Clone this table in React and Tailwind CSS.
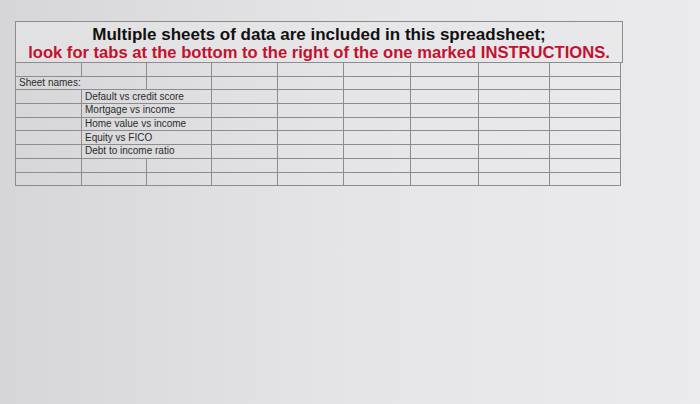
const widths = [65, 65, 65, 66, 66, 67, 68, 71, 71]

const sheetNames = [
  'Default vs credit score',
  'Mortgage vs income',
  'Home value vs income',
  'Equity vs FICO',
  'Debt to income ratio',
]

function Cell({ children, span = 1 }) {
  return (
    <td
      colSpan={span}
      className="border border-[#8c8c8e] px-[3px] p-0 h-[13.7px] leading-[12px] text-[10px] text-[#2b2b2b] whitespace-nowrap overflow-hidden align-middle"
    >
      {children}
    </td>
  )
}

function Empty({ count }) {
  return Array.from({ length: count }).map((_, i) => <Cell key={i} />)
}

export default function App() {
  return (
    <div className="h-[404px] w-[700px] overflow-hidden bg-gradient-to-r from-[#d6d6d8] via-[#e5e5e7] to-[#ebebed] pt-[21px] pl-[15px] font-['Liberation_Sans',Arial,sans-serif]">
      <div className="w-[608px] h-[42px] border border-[#8c8c8e] bg-[#e7e7e9]/60 pt-[4px] text-center font-bold leading-[18px]">
        <p className="text-[#111] text-[17px]">
          Multiple sheets of data are included in this spreadsheet;
        </p>
        <p className="text-[#c3122f] text-[16.6px]">
          look for tabs at the bottom to the right of the one marked INSTRUCTIONS.
        </p>
      </div>

      <table className="table-fixed border-collapse w-[605px] -mt-px">
        <colgroup>
          {widths.map((w, i) => (
            <col key={i} style={{ width: i === 0 ? w + 1 : w }} />
          ))}
        </colgroup>
        <tbody>
          <tr>
            <Empty count={9} />
          </tr>
          <tr>
            <Cell span={2}>Sheet names:</Cell>
            <Empty count={7} />
          </tr>
          {sheetNames.map((name) => (
            <tr key={name}>
              <Cell />
              <Cell span={2}>{name}</Cell>
              <Empty count={6} />
            </tr>
          ))}
          <tr>
            <Empty count={9} />
          </tr>
          <tr>
            <Empty count={9} />
          </tr>
        </tbody>
      </table>
    </div>
  )
}
